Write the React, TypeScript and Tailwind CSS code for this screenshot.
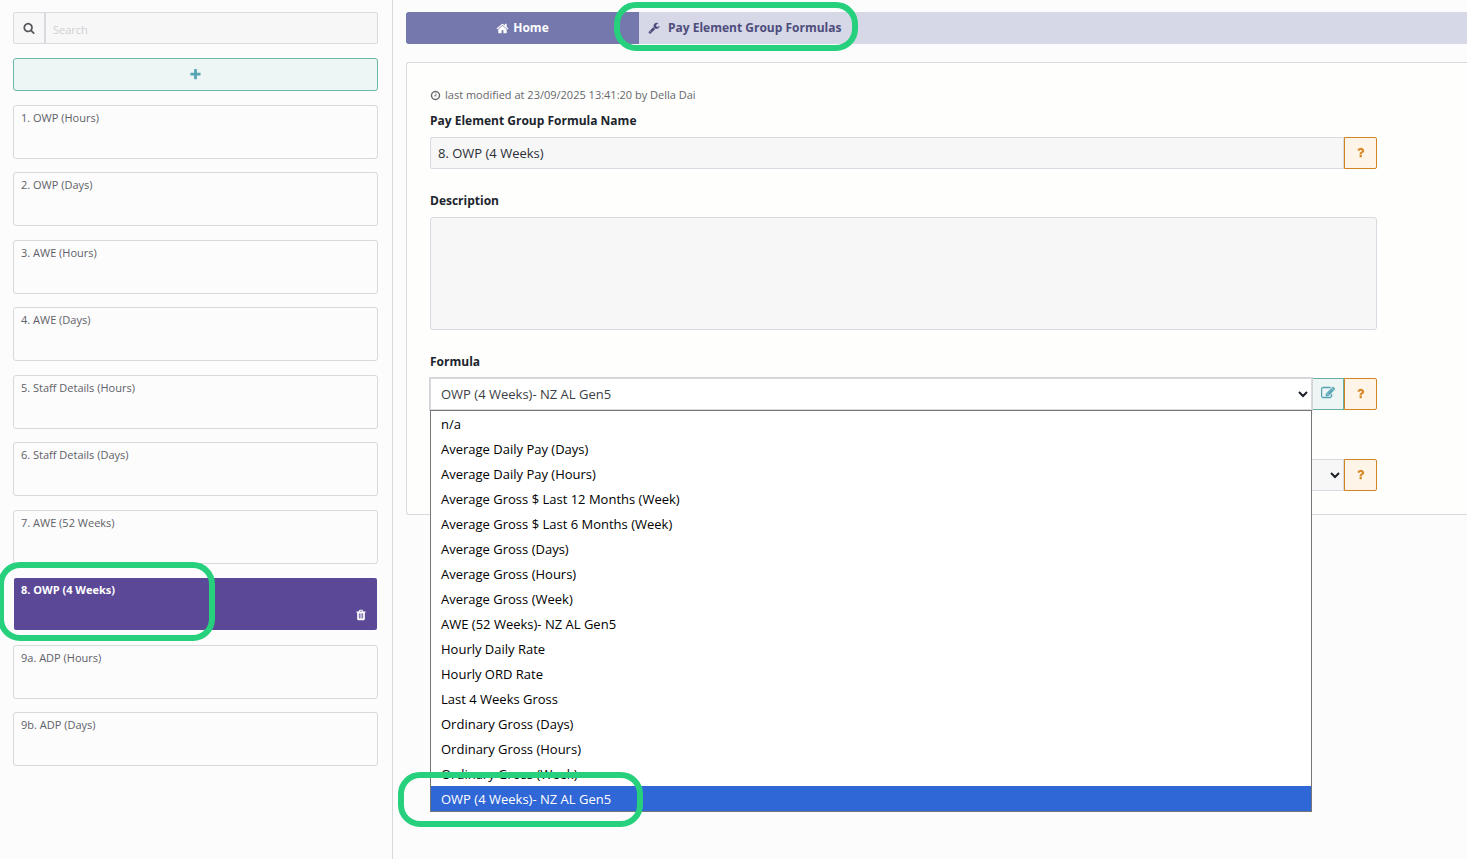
import { useState } from 'react';

// Font Awesome 4 glyphs on their 1792 grid
const ICONS = {
  search:
    'M1216 832q0-185-131.5-316.5t-316.5-131.5-316.5 131.5-131.5 316.5 131.5 316.5 316.5 131.5 316.5-131.5 131.5-316.5zm512 832q0 52-38 90t-90 38q-54 0-90-38l-343-342q-179 124-399 124-143 0-273.5-55.5t-225-150-150-225-55.5-273.5 55.5-273.5 150-225 225-150 273.5-55.5 273.5 55.5 225 150 150 225 55.5 273.5q0 220-124 399l343 343q37 37 37 90z',
  plus: 'M1600 736v192q0 40-28 68t-68 28h-416v416q0 40-28 68t-68 28h-192q-40 0-68-28t-28-68v-416h-416q-40 0-68-28t-28-68v-192q0-40 28-68t68-28h416v-416q0-40 28-68t68-28h192q40 0 68 28t28 68v416h416q40 0 68 28t28 68z',
  home: 'M1472 992v480q0 26-19 45t-45 19h-384v-384h-256v384h-384q-26 0-45-19t-19-45v-480q0-1 .5-3t.5-3l575-474 575 474q1 2 1 6zm223-69l-62 74q-8 9-21 11h-3q-13 0-21-7l-692-577-692 577q-12 8-24 7-13-2-21-11l-62-74q-8-10-7-23.5t11-21.5l719-599q32-26 76-26t76 26l244 204v-195q0-14 9-23t23-9h192q14 0 23 9t9 23v408l219 182q10 8 11 21.5t-7 23.5z',
  wrench:
    'M448 1472q0-26-19-45t-45-19-45 19-19 45 19 45 45 19 45-19 19-45zm644-420l-682 682q-37 37-90 37-52 0-91-37l-106-108q-38-36-38-90 0-53 38-91l681-681q39 98 114.5 173.5t173.5 114.5zm634-435q0 39-23 106-47 134-164.5 217.5t-258.5 83.5q-185 0-316.5-131.5t-131.5-316.5 131.5-316.5 316.5-131.5q58 0 121.5 16.5t107.5 46.5q16 11 16 28t-16 28l-293 169v224l193 107q5-3 79-48.5t135.5-81 70.5-35.5q15 0 23.5 10t8.5 25z',
  clock:
    'M1024 544v448q0 14-9 23t-23 9h-320q-14 0-23-9t-9-23v-64q0-14 9-23t23-9h224v-352q0-14 9-23t23-9h64q14 0 23 9t9 23zm416 352q0-148-73-273t-198-198-273-73-273 73-198 198-73 273 73 273 198 198 273 73 273-73 198-198 73-273zm224 0q0 209-103 385.5t-279.5 279.5-385.5 103-385.5-103-279.5-279.5-103-385.5 103-385.5 279.5-279.5 385.5-103 385.5 103 279.5 279.5 103 385.5z',
  trash:
    'M704 1376v-704q0-14-9-23t-23-9h-64q-14 0-23 9t-9 23v704q0 14 9 23t23 9h64q14 0 23-9t9-23zm256 0v-704q0-14-9-23t-23-9h-64q-14 0-23 9t-9 23v704q0 14 9 23t23 9h64q14 0 23-9t9-23zm256 0v-704q0-14-9-23t-23-9h-64q-14 0-23 9t-9 23v704q0 14 9 23t23 9h64q14 0 23-9t9-23zm-544-992h448l-48-117q-7-9-17-11h-317q-10 2-17 11zm928 32v64q0 14-9 23t-23 9h-96v948q0 83-47 143.5t-113 60.5h-832q-66 0-113-58.5t-47-141.5v-952h-96q-14 0-23-9t-9-23v-64q0-14 9-23t23-9h309l70-167q15-37 54-63t79-26h320q40 0 79 26t54 63l70 167h309q14 0 23 9t9 23z',
  edit: 'M888 1184l116-116-152-152-116 116v56h96v96h56zm440-720q-16-16-33 1l-350 350q-17 17-1 33t33-1l350-350q17-17 1-33zm80 594v190q0 119-84.5 203.5t-203.5 84.5h-832q-119 0-203.5-84.5t-84.5-203.5v-832q0-119 84.5-203.5t203.5-84.5h832q63 0 117 25 15 7 18 23 3 17-9 29l-49 49q-14 14-32 8-23-6-45-6h-832q-66 0-113 47t-47 113v832q0 66 47 113t113 47h832q66 0 113-47t47-113v-126q0-13 9-22l64-64q15-15 35-7t20 29zm-96-738l288 288-672 672h-288v-288zm444 132l-92 92-288-288 92-92q28-28 68-28t68 28l152 152q28 28 28 68t-28 68z',
  question:
    'M1088 1256v240q0 16-12 28t-28 12h-240q-16 0-28-12t-12-28v-240q0-16 12-28t28-12h240q16 0 28 12t12 28zm316-600q0 54-15.5 101t-35 76.5-55 59.5-57.5 43.5-61 35.5q-41 23-68.5 65t-27.5 67q0 17-12 32.5t-28 15.5h-240q-15 0-25.5-18.5t-10.5-37.5v-45q0-83 65-156.5t143-108.5q59-27 84-56t25-76q0-42-46.5-74t-107.5-32q-65 0-108 29-35 25-107 115-13 16-31 16-12 0-25-8l-164-125q-13-10-15.5-25t5.5-28q160-266 464-266 80 0 161 31t146 83 106 127.5 41 158.5z',
};

function Icon({ name, className }: { name: keyof typeof ICONS; className: string }) {
  return (
    <svg viewBox="0 0 1792 1792" fill="currentColor" className={className} aria-hidden="true">
      <path d={ICONS[name]} />
    </svg>
  );
}

function Chevron() {
  return (
    <svg
      viewBox="0 0 10 7"
      fill="none"
      stroke="#1b1f27"
      strokeWidth="2"
      className="pointer-events-none absolute top-[13px] right-1 h-[7px] w-[10px]"
      aria-hidden="true"
    >
      <path d="M1 1l4 4 4-4" />
    </svg>
  );
}

function HelpButton() {
  return (
    <button
      type="button"
      aria-label="Help"
      className="flex h-8 w-[33px] shrink-0 items-center justify-center rounded-r-xs border border-[#d38422] bg-[#fef4e8] pb-[2px] text-[#d98a2b]"
    >
      <Icon name="question" className="h-[13px] w-[13px]" />
    </button>
  );
}

// Green highlight drawn over the page
function Marker({ className }: { className: string }) {
  return (
    <div
      aria-hidden="true"
      className={`pointer-events-none absolute z-20 rounded-[22px] border-6 border-[#27d07d] ${className}`}
    />
  );
}

const groups = [
  '1. OWP (Hours)',
  '2. OWP (Days)',
  '3. AWE (Hours)',
  '4. AWE (Days)',
  '5. Staff Details (Hours)',
  '6. Staff Details (Days)',
  '7. AWE (52 Weeks)',
  '8. OWP (4 Weeks)',
  '9a. ADP (Hours)',
  '9b. ADP (Days)',
];

const formulas = [
  'n/a',
  'Average Daily Pay (Days)',
  'Average Daily Pay (Hours)',
  'Average Gross $ Last 12 Months (Week)',
  'Average Gross $ Last 6 Months (Week)',
  'Average Gross (Days)',
  'Average Gross (Hours)',
  'Average Gross (Week)',
  'AWE (52 Weeks)- NZ AL Gen5',
  'Hourly Daily Rate',
  'Hourly ORD Rate',
  'Last 4 Weeks Gross',
  'Ordinary Gross (Days)',
  'Ordinary Gross (Hours)',
  'Ordinary Gross (Week)',
  'OWP (4 Weeks)- NZ AL Gen5',
];

const labelClass = 'block text-xs leading-4 font-bold text-[#20252d]';

function Sidebar() {
  return (
    <aside className="w-[393px] shrink-0 border-r border-[#d9d9dc] pt-3 pr-[14px] pl-[13px]">
      <div className="flex h-8 rounded-xs border border-[#d9dadf] bg-[#f7f7f7]">
        <label
          htmlFor="search"
          aria-label="Search"
          className="flex w-8 items-center justify-center border-r-2 border-[#d9dadf] text-[#55565c]"
        >
          <Icon name="search" className="h-3 w-3" />
        </label>
        <input
          id="search"
          type="text"
          placeholder="Search"
          className="min-w-0 flex-1 px-[7px] pt-1 text-[11px] outline-none placeholder:text-[#cfd0d4]"
        />
      </div>

      <button
        type="button"
        aria-label="Add"
        className="mt-[14px] flex h-[33px] w-full items-center justify-center rounded-[3px] border border-[#68b9a6] bg-[#edf5f5] text-[#56a5b5]"
      >
        <Icon name="plus" className="h-[13px] w-[13px]" />
      </button>

      <ul className="mt-[14px] flex h-[661px] flex-col justify-between">
        {groups.map((name) =>
          name.startsWith('8.') ? (
            <li
              key={name}
              className="relative h-[54px] rounded-[3px] border border-transparent bg-[#5b4897] bg-clip-padding px-[7px] pt-1 text-[11px] leading-4 font-bold text-white"
            >
              <a href="#group">{name}</a>
              <button type="button" aria-label="Delete" className="absolute right-[10px] bottom-[9px]">
                <Icon name="trash" className="h-3 w-3" />
              </button>
              <Marker className="-top-4 -left-4 h-[79px] w-[217px]" />
            </li>
          ) : (
            <li
              key={name}
              className="h-[54px] rounded-[3px] border border-[#d9d9dc] px-[7px] pt-1 text-[11px] leading-4 text-[#606168]"
            >
              <a href="#group">{name}</a>
            </li>
          ),
        )}
      </ul>
    </aside>
  );
}

export default function App() {
  const [formula, setFormula] = useState('OWP (4 Weeks)- NZ AL Gen5');

  return (
    <div className="flex min-h-screen overflow-hidden bg-[#fcfcfc] font-['Open_Sans','Noto_Sans',sans-serif]">
      <Sidebar />

      <main className="min-w-0 flex-1 pt-3 pl-[13px]">
        <nav className="flex h-8 rounded-l-[3px] bg-[#d6d7e7] text-xs font-bold">
          <a
            href="#home"
            className="flex w-[233px] items-center justify-center gap-1 rounded-l-[3px] bg-[#7578ad] text-white"
          >
            <Icon name="home" className="h-[13px] w-[13px]" />
            Home
          </a>
          <div className="relative flex items-center gap-2 pl-[9px] text-[#4d4d7c]">
            <Icon name="wrench" className="h-3 w-3" />
            <span>Pay Element Group Formulas</span>
            <Marker className="-top-[10px] -left-[25px] h-[49px] w-[244px]" />
          </div>
        </nav>

        <form className="mt-[18px] rounded-l-[3px] border border-r-0 border-[#d9d9e0] bg-[#fefefc] pt-6 pr-[90px] pb-[23px] pl-[23px]">
          <p className="flex items-center gap-1 text-[11px] leading-4 text-[#66676c]">
            <Icon name="clock" className="h-[11px] w-[11px]" />
            last modified at 23/09/2025 13:41:20 by Della Dai
          </p>

          <label htmlFor="name" className={`${labelClass} mt-[10px]`}>
            Pay Element Group Formula Name
          </label>
          <div className="mt-2 flex">
            <input
              id="name"
              type="text"
              defaultValue="8. OWP (4 Weeks)"
              className="h-8 min-w-0 flex-1 rounded-l-xs border border-[#d9dadf] bg-[#f7f7f7] px-[7px] text-[13px] text-[#2b2f36] outline-none"
            />
            <HelpButton />
          </div>

          <label htmlFor="description" className={`${labelClass} mt-6`}>
            Description
          </label>
          <textarea
            id="description"
            className="mt-2 block h-[113px] w-full resize-none rounded-[3px] border border-[#d9dadf] bg-[#f7f7f7] p-[7px] text-[13px] outline-none"
          />

          <label htmlFor="formula" className={`${labelClass} mt-6`}>
            Formula
          </label>
          <div className="mt-2 flex">
            <div className="relative min-w-0 flex-1">
              <select
                id="formula"
                value={formula}
                onChange={(e) => setFormula(e.target.value)}
                className="block h-8 w-full appearance-none border border-[#d9dadf] bg-white px-[10px] pt-[2px] text-[13px] text-[#3b3e45] shadow-[0_0_0_1px_#d3d4d6] outline-none"
              >
                {formulas.map((name) => (
                  <option key={name}>{name}</option>
                ))}
              </select>
              <Chevron />
              <ul
                role="listbox"
                aria-label="Formula"
                className="absolute top-full left-0 z-10 w-full border border-[#767676] bg-white text-[13px] leading-[23px] text-black"
              >
                {formulas.map((name) => (
                  <li
                    key={name}
                    role="option"
                    aria-selected={name === formula}
                    onClick={() => setFormula(name)}
                    className="px-[10px] pt-[2px] aria-selected:bg-[#2f67d6] aria-selected:text-white"
                  >
                    {name}
                  </li>
                ))}
              </ul>
              <Marker className="top-[394px] -left-8 h-[55px] w-[245px]" />
            </div>
            <button
              type="button"
              aria-label="Edit formula"
              className="flex h-8 w-8 shrink-0 items-center justify-center border border-[#68ada2] bg-[#edf5f5] pb-[2px] text-[#56a5b5]"
            >
              <Icon name="edit" className="h-[14px] w-[14px] stroke-current [stroke-width:70]" />
            </button>
            <HelpButton />
          </div>

          <div className="mt-[49px] flex">
            <div className="relative min-w-0 flex-1">
              <select
                aria-label="Rate"
                className="block h-8 w-full appearance-none border border-[#d9dadf] bg-[#f7f7f7] px-[10px] text-[13px] outline-none"
              />
              <Chevron />
            </div>
            <HelpButton />
          </div>
        </form>
      </main>
    </div>
  );
}
